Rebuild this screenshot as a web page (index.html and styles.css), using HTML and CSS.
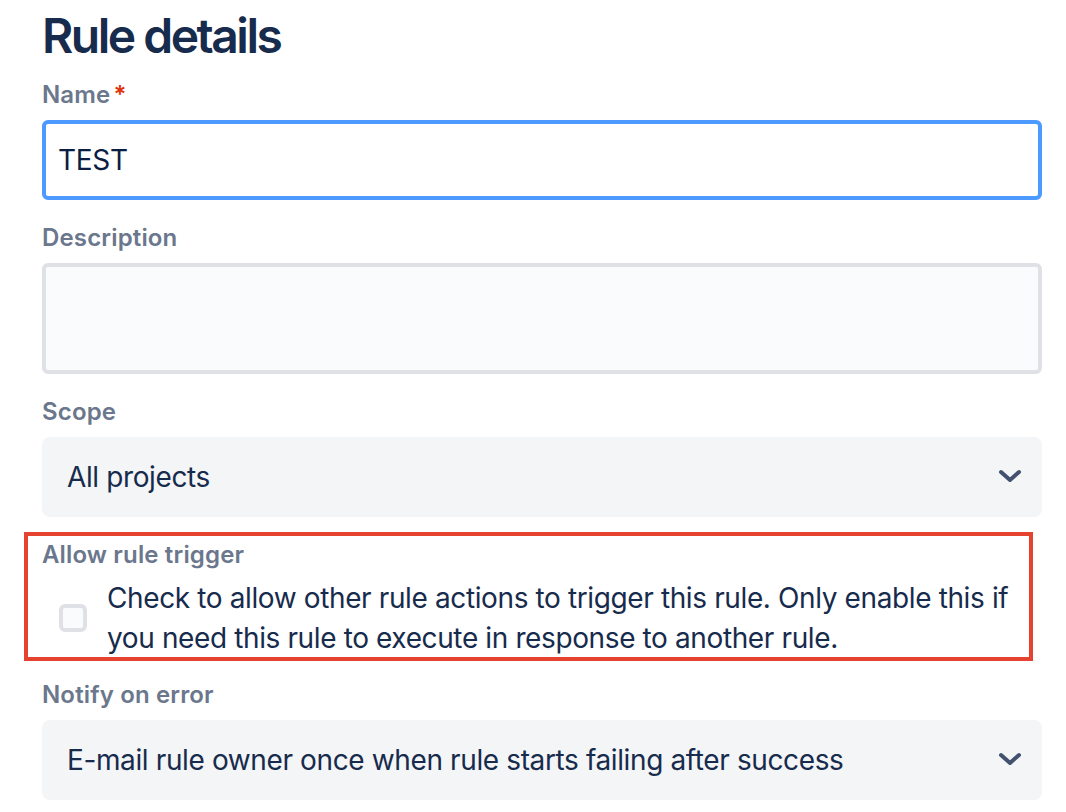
FILE: index.html
```html
<!DOCTYPE html>
<html lang="en">
<head>
<meta charset="utf-8">
<title>Rule details</title>
<link rel="stylesheet" href="styles.css">
</head>
<body>
<div class="page">
  <h1 class="title">Rule details</h1>

  <div class="field field-first">
    <div class="label">Name<span class="req">*</span></div>
    <div class="input input-focus">TEST</div>
  </div>

  <div class="field">
    <div class="label">Description</div>
    <div class="textarea"></div>
  </div>

  <div class="field">
    <div class="label">Scope</div>
    <div class="select">
      <span class="select-value">All projects</span>
      <svg class="chevron" width="24" height="16" viewBox="0 0 24 16"><polyline points="3,3 12,11 21,3" fill="none" stroke="#42526E" stroke-width="4" stroke-linecap="round" stroke-linejoin="round"/></svg>
    </div>
  </div>

  <div class="field field-annotated">
    <div class="label">Allow rule trigger</div>
    <div class="check-row">
      <span class="checkbox"></span>
      <span class="check-text">Check to allow other rule actions to trigger this rule. Only enable this if you need this rule to execute in response to another rule.</span>
    </div>
    <div class="annotation"></div>
  </div>

  <div class="field">
    <div class="label">Notify on error</div>
    <div class="select">
      <span class="select-value">E-mail rule owner once when rule starts failing after success</span>
      <svg class="chevron" width="24" height="16" viewBox="0 0 24 16"><polyline points="3,3 12,11 21,3" fill="none" stroke="#42526E" stroke-width="4" stroke-linecap="round" stroke-linejoin="round"/></svg>
    </div>
  </div>
</div>
</body>
</html>
```

FILE: styles.css
```css
* { box-sizing: border-box; }

html, body {
  margin: 0;
  padding: 0;
  background: #ffffff;
}

body {
  font-family: Inter, "Noto Sans", "Liberation Sans", sans-serif;
  color: #172B4D;
  overflow: hidden;
}

.page {
  padding: 8px 24px 0 42px;
}

.title {
  margin: 0;
  font-size: 48px;
  line-height: 56px;
  font-weight: 600;
  letter-spacing: -2.5px;
  color: #172B4D;
}

.field {
  margin-top: 22.5px;
}

.field-first {
  margin-top: 15px;
}

.label {
  font-size: 24px;
  line-height: 32px;
  font-weight: 600;
  color: #6B778C;
  margin-bottom: 8.5px;
  letter-spacing: 0.15px;
}

.req {
  color: #DE350B;
  margin-left: 3px;
}

.input {
  height: 80px;
  border: 4px solid #DFE1E6;
  border-radius: 6px;
  padding: 0 12px;
  display: flex;
  align-items: center;
  font-size: 28px;
  line-height: 40px;
  color: #091E42;
  letter-spacing: -0.3px;
}

.input-focus {
  border-color: #4C9AFF;
  background: #ffffff;
}

.textarea {
  height: 111px;
  border: 4px solid #DFE1E6;
  border-radius: 6px;
  background: #FAFBFC;
}

.select {
  height: 80px;
  background: #F4F5F7;
  border-radius: 8px;
  padding: 0 20px 0 25px;
  display: flex;
  align-items: center;
  justify-content: space-between;
}

.select-value {
  font-size: 28px;
  line-height: 40px;
  color: #172B4D;
  letter-spacing: -0.38px;
}

.chevron {
  display: block;
}

.field-annotated {
  position: relative;
}

.check-row {
  display: flex;
  align-items: center;
  gap: 20px;
  padding-left: 17px;
  margin-top: -2px;
  margin-bottom: -1px;
}

.checkbox {
  flex: 0 0 28px;
  width: 28px;
  height: 28px;
  border: 4px solid #DFE1E6;
  border-radius: 6px;
  background: #FAFBFC;
}

.check-text {
  font-size: 28px;
  line-height: 40px;
  color: #172B4D;
  letter-spacing: -0.38px;
}

.annotation {
  position: absolute;
  left: -18px;
  top: -7px;
  width: 1009px;
  height: 129px;
  border: 4px solid #E5432F;
  pointer-events: none;
}
```
